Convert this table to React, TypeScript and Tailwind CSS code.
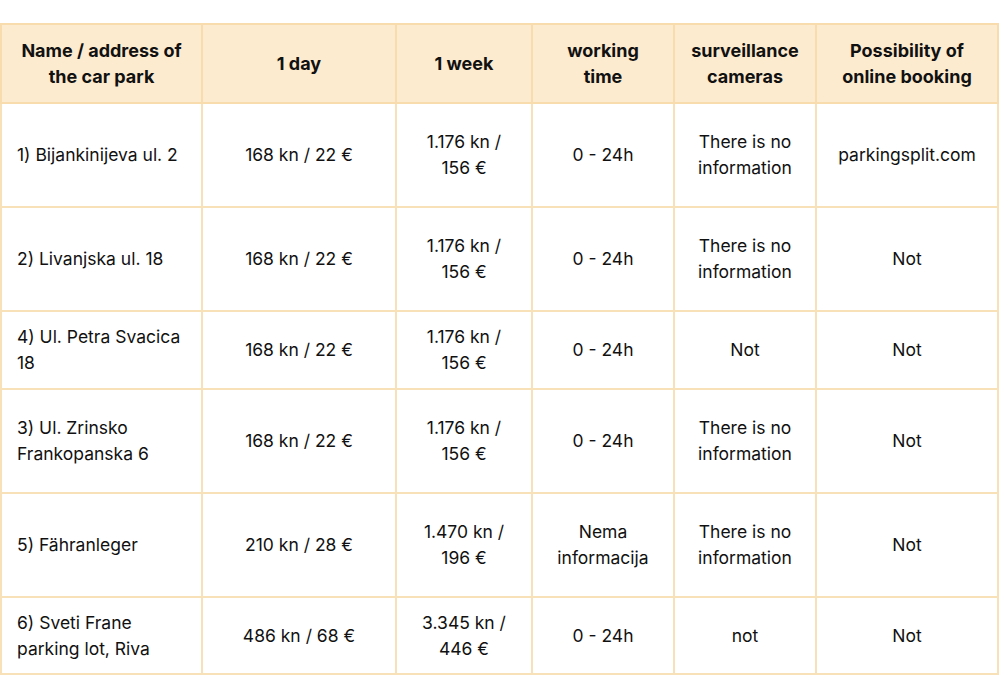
const headers = [
  ["Name / address of", "the car park"],
  ["1 day"],
  ["1 week"],
  ["working", "time"],
  ["surveillance", "cameras"],
  ["Possibility of", "online booking"],
]

const rows: { h: string; cells: string[][] }[] = [
  { h: "h-[104px]", cells: [["1) Bijankinijeva ul. 2"], ["168 kn / 22 €"], ["1.176 kn /", "156 €"], ["0 - 24h"], ["There is no", "information"], ["parkingsplit.com"]] },
  { h: "h-[104px]", cells: [["2) Livanjska ul. 18"], ["168 kn / 22 €"], ["1.176 kn /", "156 €"], ["0 - 24h"], ["There is no", "information"], ["Not"]] },
  { h: "h-[78px]", cells: [["4) Ul. Petra Svacica", "18"], ["168 kn / 22 €"], ["1.176 kn /", "156 €"], ["0 - 24h"], ["Not"], ["Not"]] },
  { h: "h-[104px]", cells: [["3) Ul. Zrinsko", "Frankopanska 6"], ["168 kn / 22 €"], ["1.176 kn /", "156 €"], ["0 - 24h"], ["There is no", "information"], ["Not"]] },
  { h: "h-[104px]", cells: [["5) Fähranleger"], ["210 kn / 28 €"], ["1.470 kn /", "196 €"], ["Nema", "informacija"], ["There is no", "information"], ["Not"]] },
  { h: "h-[77px]", cells: [["6) Sveti Frane", "parking lot, Riva"], ["486 kn / 68 €"], ["3.345 kn /", "446 €"], ["0 - 24h"], ["not"], ["Not"]] },
]

const widths = ["w-[201px]", "w-[194px]", "w-[136px]", "w-[142px]", "w-[142px]", "w-[182px]"]

function Lines({ lines }: { lines: string[] }) {
  return (
    <>
      {lines.map((l, i) => (
        <div key={i}>{l}</div>
      ))}
    </>
  )
}

export default function App() {
  return (
    <div className="w-[1000px] h-[700px] bg-white pt-[23px] font-['Inter','Liberation_Sans',sans-serif] text-[#111111]">
      <table className="border-collapse table-fixed w-[997px]">
        <colgroup>
          {widths.map((w, i) => (
            <col key={i} className={w} />
          ))}
        </colgroup>
        <thead>
          <tr className="h-[79px] bg-[#fdebcf]">
            {headers.map((h, i) => (
              <th key={i} className="border-2 border-[#f8dcae] text-center align-middle text-[18px] leading-[26px] font-bold text-[#111111] px-1">
                <Lines lines={h} />
              </th>
            ))}
          </tr>
        </thead>
        <tbody>
          {rows.map((r, ri) => (
            <tr key={ri} className={r.h}>
              {r.cells.map((c, ci) => (
                <td
                  key={ci}
                  className={
                    ci === 0
                      ? "border-2 border-[#f8e1b8] text-left align-middle text-[17.5px] leading-[26px] pl-[15px] pr-1"
                      : "border-2 border-[#f8e1b8] text-center align-middle text-[17.5px] leading-[26px] px-1"
                  }
                >
                  <Lines lines={c} />
                </td>
              ))}
            </tr>
          ))}
        </tbody>
      </table>
    </div>
  )
}
